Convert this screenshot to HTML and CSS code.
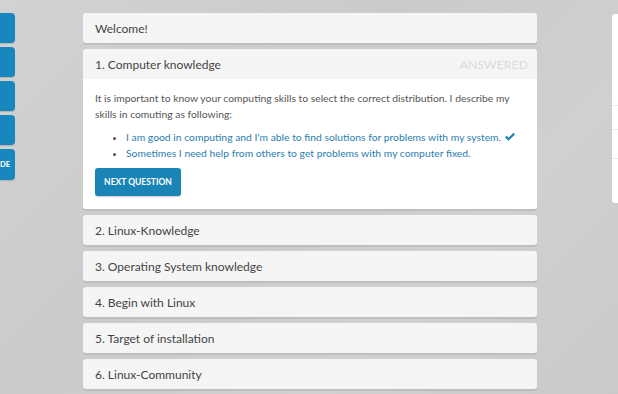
FILE: index.html
```html
<!DOCTYPE html>
<html>
<head>
<meta charset="utf-8">
<link rel="stylesheet" href="styles.css">
</head>
<body>
<div class="page">
  <nav class="tabs">
    <div class="tab"></div>
    <div class="tab"></div>
    <div class="tab"></div>
    <div class="tab"></div>
    <div class="tab">DE</div>
  </nav>
  <main class="main">
    <section class="card">
      <div class="card-head">Welcome!</div>
    </section>
    <section class="card">
      <div class="card-head"><span>1. Computer knowledge</span><span class="status">ANSWERED</span></div>
      <div class="card-body">
        <p class="intro">It is important to know your computing skills to select the correct distribution. I describe my skills in comuting as following:</p>
        <ul class="answers">
          <li><a class="answer">I am good in computing and I'm able to find solutions for problems with my system.</a> <svg class="check" viewBox="0 0 14 12" width="12" height="10"><path d="M1 6.5 L2.8 4.6 L5.2 7 L11.2 1 L13 2.9 L5.2 10.6 Z" fill="#1a84bd"/></svg></li>
          <li><a class="answer">Sometimes I need help from others to get problems with my computer fixed.</a></li>
        </ul>
        <button class="btn">NEXT QUESTION</button>
      </div>
    </section>
    <section class="card"><div class="card-head">2. Linux-Knowledge</div></section>
    <section class="card"><div class="card-head">3. Operating System knowledge</div></section>
    <section class="card"><div class="card-head">4. Begin with Linux</div></section>
    <section class="card"><div class="card-head">5. Target of installation</div></section>
    <section class="card"><div class="card-head">6. Linux-Community</div></section>
  </main>
  <aside class="side">
    <div class="side-row r1"></div>
    <div class="side-row r2"></div>
    <div class="side-row r3"></div>
    <div class="side-row r4"></div>
  </aside>
</div>
</body>
</html>
```
FILE: styles.css
```css
html, body {
  margin: 0;
  height: 100%;
  overflow: hidden;
}
body {
  background: #cdcdcd;
  background-image: linear-gradient(135deg, #d2d2d2 0%, #cbcbcb 40%, #d0d0d0 70%, #cacaca 100%);
  font-family: "Lato", "Open Sans", sans-serif;
  color: #4a4a4a;
}
.page {
  display: flex;
  align-items: flex-start;
  padding-top: 13px;
}
.tabs {
  width: 15px;
  display: flex;
  flex-direction: column;
  gap: 4px;
  flex-shrink: 0;
}
.tab {
  width: 15px;
  height: 30px;
  background: #1887bd;
  border-radius: 0 4px 4px 0;
  box-shadow: 0 1px 1px rgba(0,0,0,0.15);
  color: #fff;
  font-size: 7.5px;
  font-weight: 700;
  display: flex;
  align-items: center;
  justify-content: flex-start;
  box-sizing: border-box;
}
.tab:last-child { height: 31px; }
.main {
  margin-left: 68px;
  width: 454px;
  flex-shrink: 0;
  display: flex;
  flex-direction: column;
  gap: 6px;
}
.card {
  background: #f5f5f5;
  border-radius: 3px;
  box-shadow: 0 2px 0 #bebebe;
  overflow: hidden;
}
.card-head {
  height: 30px;
  padding: 0 9px 0 12px;
  display: flex;
  align-items: center;
  justify-content: space-between;
  font-size: 12px;
  color: #444;
}
.status {
  color: #dadada;
  font-size: 12px;
  letter-spacing: 0.2px;
}
.card-body {
  background: #fff;
  padding: 11px 12px 13px 12px;
}
.intro {
  margin: 0;
  font-size: 10.35px;
  line-height: 16px;
  color: #555;
}
.answers {
  margin: 7px 0 7px 0;
  padding-left: 31px;
  font-size: 10.35px;
  line-height: 16px;
  color: #555;
}
.answer {
  color: #2b7eb0;
}
.check {
  vertical-align: -1px;
}
.btn {
  display: block;
  background: #1a84b7;
  color: #fff;
  border: none;
  border-radius: 3px;
  font-family: inherit;
  font-weight: 700;
  font-size: 8.5px;
  height: 28px;
  width: 86px;
  padding: 0;
  box-shadow: 0 1px 1px rgba(0,0,0,0.2);
}
.side {
  margin-left: 75px;
  margin-top: 1px;
  width: 40px;
  background: #fff;
  border-radius: 3px 0 0 3px;
  flex-shrink: 0;
}
.side-row { border-bottom: 1px solid #ececec; }
.r1 { height: 91px; }
.r2 { height: 23px; }
.r3 { height: 28px; }
.r4 { height: 44px; border-bottom: none; }
```
